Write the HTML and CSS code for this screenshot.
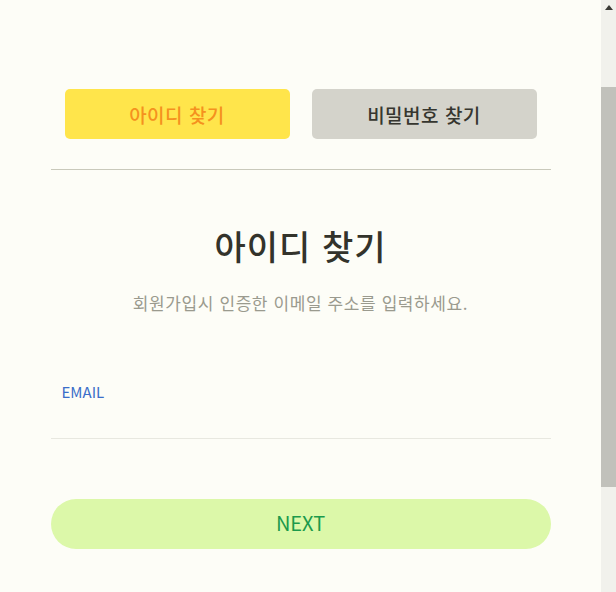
FILE: index.html
```html
<!DOCTYPE html>
<html lang="ko">
<head>
<meta charset="utf-8">
<title>아이디 찾기</title>
<link rel="stylesheet" href="styles.css">
</head>
<body>
<div class="window">
  <main class="page">
    <div class="card">
      <div class="tabs">
        <button class="tab tab-active">아이디 찾기</button>
        <button class="tab tab-idle">비밀번호 찾기</button>
      </div>
      <hr class="divider">
      <h1 class="title">아이디 찾기</h1>
      <p class="subtitle">회원가입시 인증한 이메일 주소를 입력하세요.</p>
      <label class="label" for="email">EMAIL</label>
      <input class="input" id="email" type="email">
      <button class="next">NEXT</button>
    </div>
  </main>
  <div class="scrollbar">
    <div class="arrow">
      <svg class="arrow-icon" width="8" height="5" viewBox="0 0 8 5"><path d="M0 5 L4 0 L8 5 Z" fill="#3a3a35"/></svg>
    </div>
    <div class="thumb"></div>
  </div>
</div>
</body>
</html>
```

FILE: styles.css
```css
html, body {
  margin: 0;
  padding: 0;
}
body {
  background: #fdfdf7;
  font-family: "Noto Sans CJK KR", "Noto Sans", sans-serif;
}
.window {
  display: flex;
  height: 592px;
  overflow: hidden;
}
.page {
  flex: 1;
  padding-top: 89px;
}
.card {
  width: 500px;
  margin: 0 auto;
  display: flex;
  flex-direction: column;
}
.tabs {
  display: flex;
  gap: 22px;
  padding: 0 14px;
}
.tab {
  flex: 1;
  height: 50px;
  border: none;
  border-radius: 5px;
  font-family: inherit;
  font-size: 19px;
  letter-spacing: 0.5px;
  font-weight: 500;
  padding: 0;
}
.tab-active {
  background: #ffe54b;
  color: #f5911e;
}
.tab-idle {
  background: #d4d3cb;
  color: #36362f;
}
.divider {
  margin: 30px 0 0;
  border: none;
  border-top: 1px solid #c9c9bb;
  height: 0;
}
.title {
  margin: 53px 0 0;
  text-align: center;
  font-size: 34px;
  letter-spacing: 1px;
  line-height: 46px;
  font-weight: 500;
  color: #33332b;
}
.subtitle {
  margin: 22px 0 0;
  text-align: center;
  font-size: 17px;
  letter-spacing: 0.6px;
  line-height: 24px;
  color: #9a9a8e;
}
.label {
  margin: 67px 0 0 11px;
  font-size: 15px;
  line-height: 20px;
  color: #3a6ec9;
}
.input {
  height: 37px;
  box-sizing: border-box;
  border: none;
  border-bottom: 1px solid #e8e8e0;
  background: transparent;
  outline: none;
  padding: 0 11px;
  font-family: inherit;
  font-size: 16px;
}
.next {
  margin-top: 60px;
  height: 50px;
  border: none;
  border-radius: 25px;
  background: #dcf8a9;
  color: #1b9a4c;
  font-family: inherit;
  font-size: 20px;
  line-height: 46px;
  padding: 0 0 2px;
}
.scrollbar {
  width: 15px;
  flex: none;
  background: #f1f1ec;
  display: flex;
  flex-direction: column;
}
.arrow {
  width: 15px;
  height: 15px;
  display: flex;
  align-items: center;
  justify-content: center;
}
.arrow-icon {
  display: block;
}
.thumb {
  width: 15px;
  height: 400px;
  margin-top: 72px;
  background: #c1c1bb;
}
```
